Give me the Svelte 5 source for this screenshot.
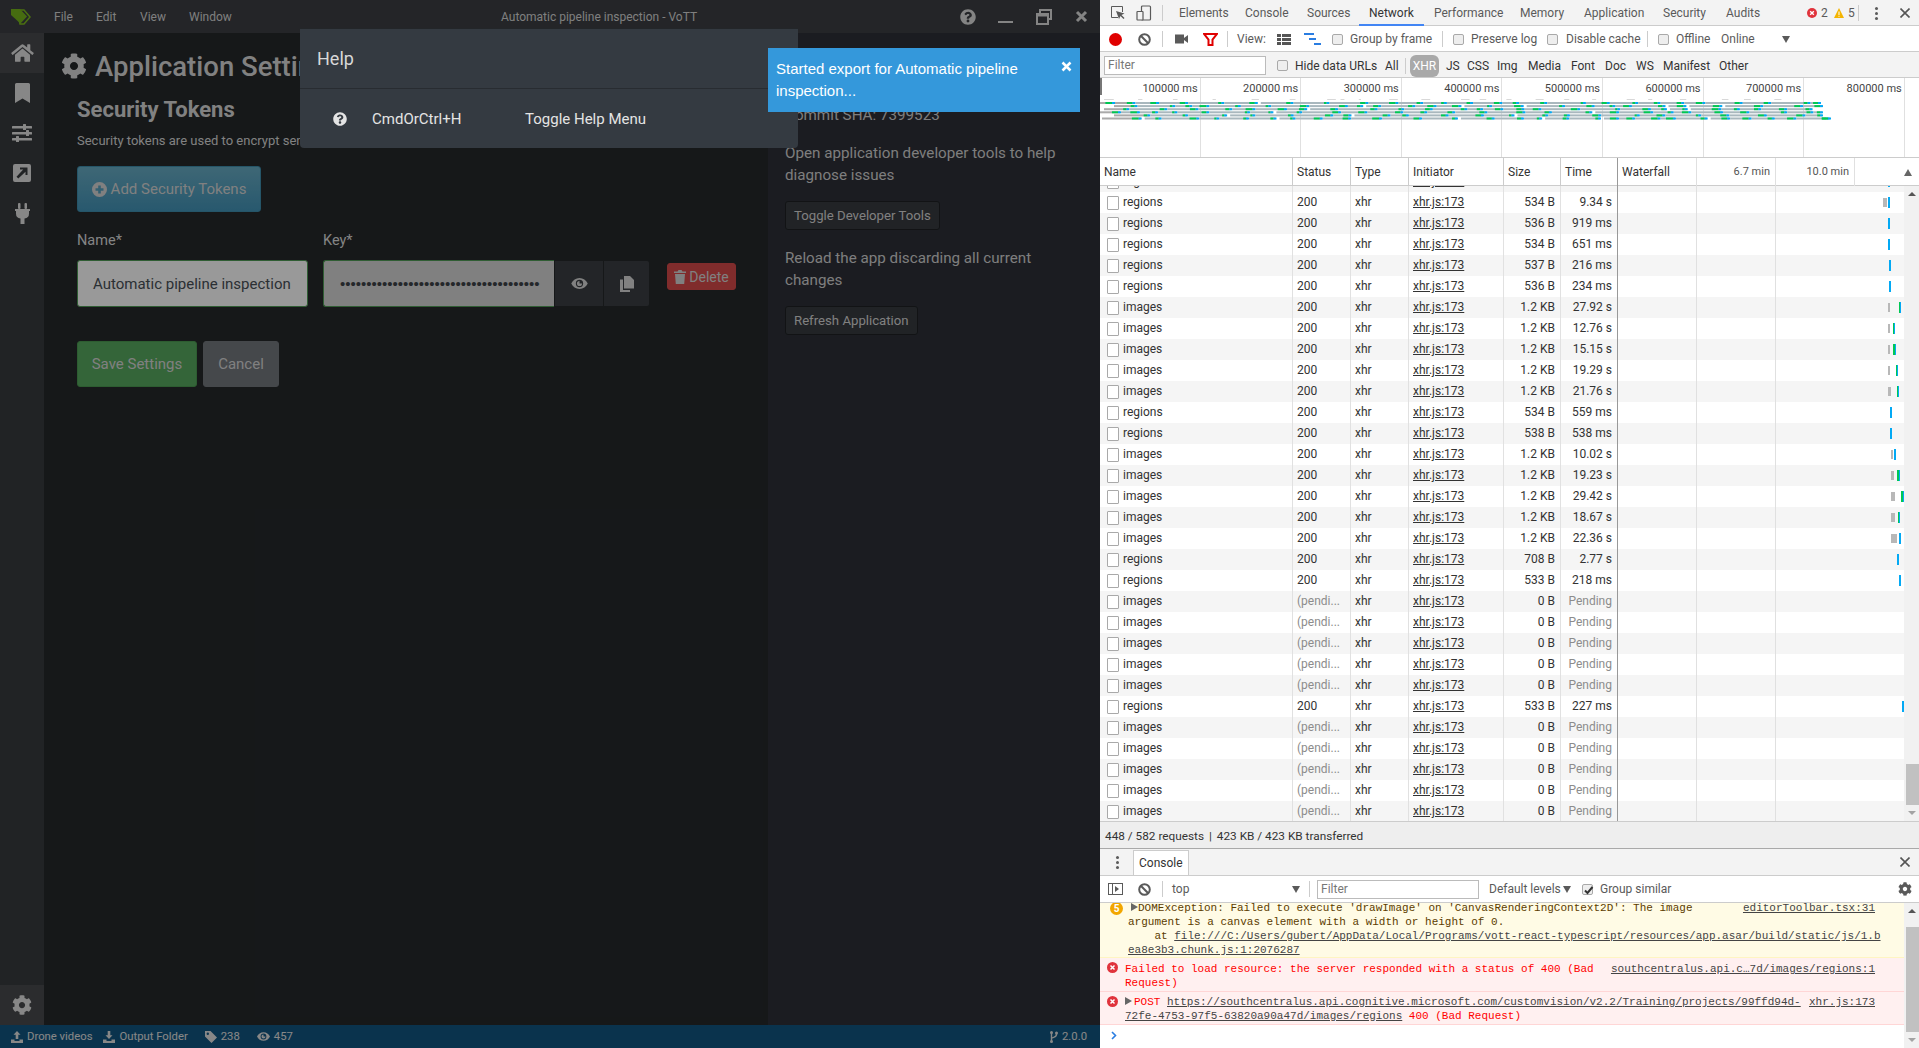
<script lang="ts">
  type Bar = { left: number; width: number; kind: string };
  type Row = { name: string; status: string; size: string; time: string; bars: Bar[] };

  // grey = queueing, green = waiting, blue = download; offsets from the waterfall column
  function bars(grey: number[] | null, green: number[] | null, blue: number[] | null): Bar[] {
    const out: Bar[] = [];
    if (grey) out.push({ left: grey[0] + 82, width: grey[1], kind: 'grey' });
    if (green) out.push({ left: green[0] + 82, width: green[1], kind: 'green' });
    if (blue) out.push({ left: blue[0] + 82, width: blue[1], kind: 'blue' });
    return out;
  }

  const pending = (): Row => ({ name: 'images', status: '(pendi...', size: '0 B', time: 'Pending', bars: [] });

  const rows: Row[] = [
    { name: 'regions', status: '200', size: '534 B', time: '9.34 s', bars: bars([183, 4], null, [187.5, 2]) },
    { name: 'regions', status: '200', size: '536 B', time: '919 ms', bars: bars(null, null, [187.5, 2]) },
    { name: 'regions', status: '200', size: '534 B', time: '651 ms', bars: bars(null, null, [187.5, 2]) },
    { name: 'regions', status: '200', size: '537 B', time: '216 ms', bars: bars(null, null, [188.5, 2]) },
    { name: 'regions', status: '200', size: '536 B', time: '234 ms', bars: bars(null, null, [188.5, 2]) },
    { name: 'images', status: '200', size: '1.2 KB', time: '27.92 s', bars: bars([188, 2], [199, 1], [200, 1]) },
    { name: 'images', status: '200', size: '1.2 KB', time: '12.76 s', bars: bars([188, 2], [193, 1], [194, 1]) },
    { name: 'images', status: '200', size: '1.2 KB', time: '15.15 s', bars: bars([188, 2], [193, 2], [195, 1]) },
    { name: 'images', status: '200', size: '1.2 KB', time: '19.29 s', bars: bars([188, 2], [196, 1], [197, 1]) },
    { name: 'images', status: '200', size: '1.2 KB', time: '21.76 s', bars: bars([188, 3], [197, 1], [198, 1]) },
    { name: 'regions', status: '200', size: '534 B', time: '559 ms', bars: bars(null, null, [190, 2]) },
    { name: 'regions', status: '200', size: '538 B', time: '538 ms', bars: bars(null, null, [190, 2]) },
    { name: 'images', status: '200', size: '1.2 KB', time: '10.02 s', bars: bars([191, 2], null, [194, 2]) },
    { name: 'images', status: '200', size: '1.2 KB', time: '19.23 s', bars: bars([191, 3], [197, 2], [199, 1]) },
    { name: 'images', status: '200', size: '1.2 KB', time: '29.42 s', bars: bars([191, 4], [201, 2], [203, 1]) },
    { name: 'images', status: '200', size: '1.2 KB', time: '18.67 s', bars: bars([191, 4], [198, 1], [199, 1]) },
    { name: 'images', status: '200', size: '1.2 KB', time: '22.36 s', bars: bars([191, 6], null, [199, 2]) },
    { name: 'regions', status: '200', size: '708 B', time: '2.77 s', bars: bars(null, null, [197, 2]) },
    { name: 'regions', status: '200', size: '533 B', time: '218 ms', bars: bars(null, null, [199, 2]) },
    pending(), pending(), pending(), pending(), pending(),
    { name: 'regions', status: '200', size: '533 B', time: '227 ms', bars: bars(null, null, [202, 2]) },
    pending(), pending(), pending(), pending(), pending()
  ];

  // overview strip: six lanes of requests, drawn from a small seeded generator
  let seed = 7;
  function rnd(): number {
    seed = (seed * 16807) % 2147483647;
    return seed / 2147483647;
  }

  const laneEnds = [720, 722, 715, 722, 722, 730];
  const laneStarts = [0, 14, 4, 0, 14, 2];
  const overview: { x: number; y: number; w: number; h: number; fill: string }[] = [];
  laneEnds.forEach((end, lane) => {
    const y = 24 + lane * 3.1;
    let x = laneStarts[lane];
    while (x < end) {
      const len = Math.min(14 + rnd() * 26, end - x);
      overview.push({ x, y, w: len, h: 2, fill: x < 20 ? '#aaaaaa' : '#a9b8be' });
      const g = 2 + rnd() * 5;
      overview.push({ x: x + len - g - 2, y, w: g, h: 2, fill: '#00c853' });
      overview.push({ x: x + len - 2, y, w: 3, h: 2, fill: '#03a9f4' });
      x += len + (rnd() < 0.15 ? 4 : 1);
    }
  });
  // faint stubs above the first lane
  for (let x = 4; x < 690; x += 12 + rnd() * 32) {
    overview.push({ x, y: 21, w: 2 + rnd() * 8, h: 1, fill: '#d8d8d8' });
  }
  const ticks = [100, 200, 300, 400, 500, 600, 700, 800];
</script>

{#snippet question(size)}
  <svg width={size} height={size} viewBox="0 0 512 512" fill="currentColor"><path d="M504 256c0 136.997-111.043 248-248 248S8 392.997 8 256C8 119.083 119.043 8 256 8s248 111.083 248 248zM262.655 90c-54.497 0-89.255 22.957-116.549 63.758-3.536 5.286-2.353 12.415 2.715 16.258l34.699 26.31c5.205 3.947 12.621 3.008 16.665-2.122 17.864-22.658 30.113-35.797 57.303-35.797 20.429 0 45.698 13.148 45.698 32.958 0 14.976-12.363 22.667-32.534 33.976C247.128 238.528 216 254.941 216 296v4c0 6.627 5.373 12 12 12h56c6.627 0 12-5.373 12-12v-1.333c0-28.462 83.186-29.647 83.186-106.667 0-58.002-60.165-102-116.531-102zM256 338c-25.365 0-46 20.635-46 46 0 25.364 20.635 46 46 46s46-20.636 46-46c0-25.365-20.635-46-46-46z"/></svg>
{/snippet}

{#snippet cog(size)}
  <svg width={size} height={size} viewBox="0 0 512 512" fill="currentColor"><path d="M487.4 315.7l-42.6-24.6c4.3-23.2 4.3-47 0-70.2l42.6-24.6c4.9-2.8 7.1-8.6 5.5-14-11.1-35.6-30-67.8-54.7-94.6-3.8-4.1-10-5.1-14.8-2.3L380.8 110c-17.9-15.4-38.5-27.3-60.8-35.1V25.8c0-5.6-3.9-10.5-9.4-11.7-36.7-8.2-74.3-7.8-109.2 0-5.5 1.2-9.4 6.1-9.4 11.7V75c-22.2 7.9-42.8 19.8-60.8 35.1L88.7 85.5c-4.9-2.8-11-1.9-14.8 2.3-24.7 26.7-43.6 58.9-54.7 94.6-1.7 5.4.6 11.2 5.5 14L67.3 221c-4.3 23.2-4.3 47 0 70.2l-42.6 24.6c-4.9 2.8-7.1 8.6-5.5 14 11.1 35.6 30 67.8 54.7 94.6 3.8 4.1 10 5.1 14.8 2.3l42.6-24.6c17.9 15.4 38.5 27.3 60.8 35.1v49.2c0 5.6 3.9 10.5 9.4 11.7 36.7 8.2 74.3 7.8 109.2 0 5.5-1.2 9.4-6.1 9.4-11.7v-49.2c22.2-7.9 42.8-19.8 60.8-35.1l42.6 24.6c4.9 2.8 11 1.9 14.8-2.3 24.7-26.7 43.6-58.9 54.7-94.6 1.5-5.5-.7-11.3-5.6-14.1zM256 336c-44.1 0-80-35.9-80-80s35.9-80 80-80 80 35.9 80 80-35.9 80-80 80z"/></svg>
{/snippet}

{#snippet eye(w, h)}
  <svg width={w} height={h} viewBox="0 0 18 12" fill="currentColor"><path fill-rule="evenodd" d="M9 0C5 0 1.800 2.400 0 6c1.800 3.600 5 6 9 6s7.200-2.400 9-6c-1.800-3.600-5-6-9-6zm0 10a4 4 0 1 1 0-8 4 4 0 0 1 0 8z"/><path d="M9 3.200a2.800 2.800 0 1 0 2.800 2.800H9z"/></svg>
{/snippet}

{#snippet checkbox(checked)}
  <span class="cb">{#if checked}<svg width="11" height="11" viewBox="0 0 11 11"><path d="M2 5.500l2.500 2.500L9.500 2" fill="none" stroke="#333" stroke-width="2"/></svg>{/if}</span>
{/snippet}

{#snippet errorIcon()}
  <svg class="msg-icon" width="11" height="11" viewBox="0 0 11 11"><circle cx="5.500" cy="5.500" r="5.500" fill="#e0333c"/><path d="M3.500 3.500l4 4M7.500 3.500l-4 4" stroke="#fff" stroke-width="1.500"/></svg>
{/snippet}

<div class="screen">
  <div class="app">
    <header class="titlebar">
      <div class="brand">
        <svg class="logo" width="20" height="16" viewBox="0 0 20 16"><path d="M6 1h7l6 7-6 7H9z" fill="none" stroke="#7dbb1e" stroke-width="1.500"/><path d="M0 0h9l7 7.500-6.500 7L0 6z" fill="#76b41c"/></svg>
        <nav class="menu"><span>File</span><span>Edit</span><span>View</span><span>Window</span></nav>
      </div>
      <div class="title">Automatic pipeline inspection - VoTT</div>
      <div class="winctl">
        <span class="wc-help">{@render question(16)}</span>
        <svg width="16" height="16" viewBox="0 0 16 16"><rect x="0" y="12" width="15" height="2" fill="currentColor"/></svg>
        <svg width="16" height="16" viewBox="0 0 16 16" fill="none" stroke="currentColor" stroke-width="2"><path d="M4 4V1h11v9h-3"/><rect x="1" y="5" width="11" height="10"/><path d="M1 6h11" stroke-width="3"/></svg>
        <svg width="13" height="13" viewBox="0 0 13 13"><path d="M2 2l9 9M11 2l-9 9" stroke="currentColor" stroke-width="3"/></svg>
      </div>
    </header>

    <div class="body">
      <aside class="sidebar">
        <div class="side-item active"><svg width="23" height="20" viewBox="0 0 576 512" fill="currentColor"><path d="M280.37 148.26L96 300.11V464a16 16 0 0 0 16 16l112.06-.29a16 16 0 0 0 15.92-16V368a16 16 0 0 1 16-16h64a16 16 0 0 1 16 16v95.64a16 16 0 0 0 16 16.05L464 480a16 16 0 0 0 16-16V300L295.67 148.26a12.19 12.19 0 0 0-15.3 0zM571.6 251.47L488 182.56V44.05a12 12 0 0 0-12-12h-56a12 12 0 0 0-12 12v72.61L318.47 43a48 48 0 0 0-61 0L4.34 251.47a12 12 0 0 0-1.6 16.9l25.5 31A12 12 0 0 0 45.15 301l235.22-193.74a12.19 12.19 0 0 1 15.3 0L530.9 301a12 12 0 0 0 16.9-1.6l25.5-31a12 12 0 0 0-1.7-16.93z"/></svg></div>
        <div class="side-item"><svg width="15" height="20" viewBox="0 0 15 20" fill="currentColor"><path d="M0 1.500A1.500 1.500 0 0 1 1.500 0h12A1.500 1.500 0 0 1 15 1.500V20l-7.500-4.500L0 20z"/></svg></div>
        <div class="side-item"><svg width="20" height="18" viewBox="0 0 20 18" fill="currentColor"><rect y="2" width="20" height="2.500" rx=".5"/><rect y="8" width="20" height="2.500" rx=".5"/><rect y="14" width="20" height="2.500" rx=".5"/><rect x="11" width="3" height="6" rx=".5"/><rect x="14" y="6" width="3" height="6" rx=".5"/><rect x="4" y="12" width="3" height="6" rx=".5"/></svg></div>
        <div class="side-item"><svg width="18" height="18" viewBox="0 0 18 18"><path fill="currentColor" fill-rule="evenodd" d="M2 0h14a2 2 0 0 1 2 2v14a2 2 0 0 1-2 2H2a2 2 0 0 1-2-2V2a2 2 0 0 1 2-2zm5 3.500v2h3.200L3.500 12.700l1.800 1.800 7.200-6.800V11h2V3.500z"/></svg></div>
        <div class="side-item"><svg width="15" height="21" viewBox="0 0 15 21" fill="currentColor"><rect x="3" width="2.500" height="6" rx="1"/><rect x="9.500" width="2.500" height="6" rx="1"/><path d="M0 6h15v2h-1v2.500a5 5 0 0 1-4.500 5V21h-4v-5.500A5 5 0 0 1 1 10.500V8H0z"/></svg></div>
        <div class="side-item active bottom">{@render cog(20)}</div>
      </aside>

      <main class="content">
        <h2 class="page-title">{@render cog(26)}<span>Application Settings</span></h2>
        <section class="tokens">
          <h3>Security Tokens</h3>
          <p class="hint">Security tokens are used to encrypt sensitive data within project files</p>
          <button class="btn add">
            <svg width="15" height="15" viewBox="0 0 15 15"><path fill="currentColor" fill-rule="evenodd" d="M7.500 0a7.500 7.500 0 1 0 0 15 7.500 7.500 0 0 0 0-15zM6.200 3.500h2.600v2.700h2.700v2.600H8.800v2.700H6.200V8.800H3.500V6.200h2.700z"/></svg>
            Add Security Tokens
          </button>
          <div class="token-row">
            <div class="field name">
              <span class="label">Name*</span>
              <div class="input light">Automatic pipeline inspection</div>
            </div>
            <div class="field key">
              <span class="label">Key*</span>
              <div class="key-group">
                <div class="input grey"><span class="dots">••••••••••••••••••••••••••••••••••••••••</span></div>
                <span class="addon eye">{@render eye(17, 11)}</span>
                <span class="addon copy"><svg width="14" height="16" viewBox="0 0 14 16" fill="currentColor"><path d="M4 0h6l4 4v8.500H4z"/><path d="M0 3.500h3V14h7v2H0z"/></svg></span>
              </div>
            </div>
            <button class="btn del"><svg width="12" height="14" viewBox="0 0 12 14" fill="currentColor"><path d="M0 1.500h3.500L4.500 0h3l1 1.500H12V3H0zM1 4h10l-.8 10H1.800z"/></svg> Delete</button>
          </div>
          <div class="actions">
            <button class="btn save">Save Settings</button>
            <button class="btn cancel">Cancel</button>
          </div>
        </section>
      </main>

      <aside class="panel">
        <p class="commit">Commit SHA: 7399523</p>
        <p class="note">Open application developer tools to help diagnose issues</p>
        <button class="btn ghost">Toggle Developer Tools</button>
        <p class="note second">Reload the app discarding all current changes</p>
        <button class="btn ghost">Refresh Application</button>
      </aside>
    </div>

    <footer class="statusbar">
      <span class="st first"><svg width="12" height="12" viewBox="0 0 12 12" fill="currentColor"><path d="M6 0l3.500 3.800H7.300V8H4.700V3.800H2.500zM0 8.500h3.500V10h5V8.500H12V12H0z"/></svg>Drone videos</span>
      <span class="st"><svg width="12" height="12" viewBox="0 0 12 12" fill="currentColor"><path d="M4.700 0h2.600v4.200h2.200L6 8 2.500 4.200h2.200zM0 8.500h3.500V10h5V8.500H12V12H0z"/></svg>Output Folder</span>
      <span class="st wide"><svg width="12" height="12" viewBox="0 0 12 12" fill="currentColor"><path fill-rule="evenodd" d="M0 0h5.500L12 6.500 6.500 12 0 5.500zm2.800 1.600a1.200 1.200 0 1 0 0 2.400 1.200 1.200 0 0 0 0-2.400z"/></svg>238</span>
      <span class="st wide">{@render eye(13, 9)}457</span>
      <span class="st version"><svg width="8" height="12" viewBox="0 0 8 12" fill="currentColor"><circle cx="1.500" cy="1.500" r="1.500"/><circle cx="1.500" cy="10.500" r="1.500"/><circle cx="6.500" cy="2" r="1.500"/><path d="M.8 2h1.400v8H.8zM5.800 3h1.400c0 3-2 3.500-5 4.500v-1.300c2-.7 3.600-1.200 3.600-3.200z"/></svg>2.0.0</span>
    </footer>

    <div class="backdrop"></div>
    <div class="modal">
      <div class="modal-head">Help</div>
      <div class="modal-body">
        <span class="m-icon">{@render question(14)}</span>
        <span class="m-key">CmdOrCtrl+H</span>
        <span>Toggle Help Menu</span>
      </div>
    </div>
    <div class="toast">
      <span>Started export for Automatic pipeline inspection...</span>
      <svg class="toast-x" width="11" height="11" viewBox="0 0 11 11"><path d="M1.500 1.500l8 8M9.500 1.500l-8 8" stroke="#fff" stroke-width="2.500"/></svg>
    </div>
  </div>

  <div class="devtools">
    <div class="tabs">
      <svg width="16" height="16" viewBox="0 0 16 16" fill="none" stroke="#5a5a5a"><path d="M8 12.500H1.500v-11h11V7"/><path d="M6 6l3 8 1.500-3 3 3 1-1-3-3 3-1.500z" fill="#5a5a5a" stroke="none"/></svg>
      <svg width="16" height="16" viewBox="0 0 16 16" fill="none" stroke="#5a5a5a" stroke-width="1.200"><rect x="5.500" y="1" width="9" height="14" rx="1"/><rect x="1" y="6.500" width="6" height="8.500" rx=".5" fill="#f3f3f3"/></svg>
      <i class="vr"></i>
      <span>Elements</span><span>Console</span><span>Sources</span><span class="on">Network</span><span>Performance</span><span>Memory</span><span>Application</span><span>Security</span><span>Audits</span>
      <svg width="10" height="10" viewBox="0 0 11 11"><circle cx="5.500" cy="5.500" r="5.500" fill="#e0333c"/><path d="M3.500 3.500l4 4M7.500 3.500l-4 4" stroke="#fff" stroke-width="1.500"/></svg>
      <span>2</span>
      <svg width="10" height="10" viewBox="0 0 10 10"><path d="M5 0l5 10H0z" fill="#f4b400"/><rect x="4.500" y="3.500" width="1" height="3.500" fill="#fff"/><rect x="4.500" y="7.800" width="1" height="1" fill="#fff"/></svg>
      <span>5</span>
      <i class="vr"></i>
      <i class="kebab"></i>
      <svg width="10" height="10" viewBox="0 0 10 10"><path d="M.5.5l9 9M9.500.5l-9 9" stroke="#555" stroke-width="1.600"/></svg>
    </div>

    <div class="toolbar net">
      <i class="rec"></i>
      <svg width="13" height="13" viewBox="0 0 13 13" fill="none" stroke="#5a5a5a" stroke-width="2"><circle cx="6.500" cy="6.500" r="5.300"/><path d="M2.800 2.800l7.400 7.400"/></svg>
      <i class="vr"></i>
      <svg width="13" height="10" viewBox="0 0 13 10" fill="#5a5a5a"><rect width="9" height="9" y=".5"/><path d="M9 4l4-3v8L9 6z"/></svg>
      <svg width="15" height="13" viewBox="0 0 15 13"><path d="M1 1h13L9.500 6.500V12h-4V6.500z" fill="none" stroke="#e00000" stroke-width="2"/></svg>
      <i class="vr"></i>
      <span>View:</span>
      <svg width="14" height="11" viewBox="0 0 14 11" fill="#555"><rect width="4" height="3"/><rect y="4" width="4" height="3"/><rect y="8" width="4" height="3"/><rect x="5" width="9" height="3"/><rect x="5" y="4" width="9" height="3"/><rect x="5" y="8" width="9" height="3"/></svg>
      <svg width="17" height="12" viewBox="0 0 17 12" fill="#2a7de1"><rect width="10" height="2"/><rect x="5" y="5" width="7" height="2"/><rect x="10" y="10" width="7" height="2"/></svg>
      {@render checkbox(false)}<span>Group by frame</span>
      <i class="vr"></i>
      {@render checkbox(false)}<span>Preserve log</span>
      {@render checkbox(false)}<span>Disable cache</span>
      <i class="vr"></i>
      {@render checkbox(false)}<span>Offline</span><span>Online</span>
      <i class="arrow"></i>
    </div>

    <div class="toolbar filters">
      <div class="filter-input">Filter</div>
      {@render checkbox(false)}<span>Hide data URLs</span>
      <span>All</span><i class="vr"></i><span class="pill">XHR</span>
      <span>JS</span><span>CSS</span><span>Img</span><span>Media</span><span>Font</span><span>Doc</span><span>WS</span><span>Manifest</span><span>Other</span>
    </div>

    <div class="overview">
      <div class="ticks">
        {#each ticks as t}<span class="tick">{t}000 ms</span>{/each}
      </div>
      <i class="handle"></i>
      <svg class="lanes" width="819" height="80">
        {#each overview as s}<rect x={s.x} y={s.y} width={s.w} height={s.h} fill={s.fill} />{/each}
      </svg>
    </div>

    <div class="grid-head">
      <span>Name</span><span>Status</span><span>Type</span><span>Initiator</span><span>Size</span><span class="strong">Time</span>
      <span class="wf-head"><b>Waterfall</b><em>6.7 min</em><em>10.0 min</em><i class="sort"></i></span>
    </div>

    <div class="grid-wrap">
      <div class="grid-rows">
        <div class="row alt clipped">
          <span class="name"><i class="doc"></i>regions</span><span>200</span><span>xhr</span><span class="link">xhr.js:173</span><span class="num">534 B</span><span class="num strong">1.2 s</span>
          <span class="wf"><i class="bar blue clip-bar"></i></span>
        </div>
        {#each rows as r, i}
          <div class="row" class:alt={i % 2 === 1}>
            <span class="name"><i class="doc"></i>{r.name}</span>
            <span class:dim={r.status !== '200'}>{r.status}</span>
            <span>xhr</span>
            <span class="link">xhr.js:173</span>
            <span class="num">{r.size}</span>
            <span class="num strong" class:dim={r.time === 'Pending'}>{r.time}</span>
            <span class="wf">
              {#each r.bars as b}<i class="bar {b.kind}" style="left:{b.left}px;width:{b.width}px"></i>{/each}
            </span>
          </div>
        {/each}
        <i class="guide g1"></i><i class="guide g2"></i>
      </div>
      <div class="vscroll">
        <i class="up"></i><i class="down"></i><i class="thumb net-thumb"></i>
      </div>
    </div>

    <div class="summary">448 / 582 requests <b>|</b> 423 KB / 423 KB transferred</div>

    <div class="drawer-head">
      <i class="kebab"></i>
      <span class="drawer-tab">Console</span>
      <svg width="10" height="10" viewBox="0 0 10 10"><path d="M.5.5l9 9M9.500.5l-9 9" stroke="#555" stroke-width="1.600"/></svg>
    </div>

    <div class="toolbar con">
      <svg width="15" height="12" viewBox="0 0 15 12" fill="none" stroke="#5a5a5a"><rect x=".5" y=".5" width="14" height="11"/><path d="M4.500 0v12"/><path d="M7 3l4 3-4 3z" fill="#5a5a5a" stroke="none"/></svg>
      <svg width="13" height="13" viewBox="0 0 13 13" fill="none" stroke="#5a5a5a" stroke-width="2"><circle cx="6.500" cy="6.500" r="5.300"/><path d="M2.800 2.800l7.400 7.400"/></svg>
      <i class="vr"></i>
      <span>top</span>
      <i class="arrow"></i>
      <i class="vr"></i>
      <div class="filter-input">Filter</div>
      <span>Default levels</span>
      <i class="arrow"></i>
      {@render checkbox(true)}<span>Group similar</span>
      <span class="con-gear">{@render cog(14)}</span>
    </div>

    <div class="console">
      <div class="messages">
        <div class="msg warn">
          <span class="badge">5</span>
          <a class="src" href="#top">editorToolbar.tsx:31</a>
          <div class="text"><i class="tri"></i>DOMException: Failed to execute 'drawImage' on 'CanvasRenderingContext2D': The image<br>argument is a canvas element with a width or height of 0.<br>{'    at '}<u>file:///C:/Users/gubert/AppData/Local/Programs/vott-react-typescript/resources/app.asar/build/static/js/1.b<br>ea8e3b3.chunk.js:1:2076287</u></div>
        </div>
        <div class="msg err first-err">
          {@render errorIcon()}
          <a class="src" href="#top">southcentralus.api.c…7d/images/regions:1</a>
          <div class="text">Failed to load resource: the server responded with a status of 400 (Bad<br>Request)</div>
        </div>
        <div class="msg err">
          {@render errorIcon()}
          <a class="src" href="#top">xhr.js:173</a>
          <div class="text"><i class="tri"></i>POST <u>https://southcentralus.api.cognitive.microsoft.com/customvision/v2.2/Training/projects/99ffd94d-<br>72fe-4753-97f5-63820a90a47d/images/regions</u> 400 (Bad Request)</div>
        </div>
        <div class="prompt"><svg width="6" height="9" viewBox="0 0 6 9"><path d="M1 1l3.500 3.500L1 8" fill="none" stroke="#2a7de1" stroke-width="1.600"/></svg></div>
      </div>
      <div class="vscroll">
        <i class="up"></i><i class="down"></i><i class="thumb con-thumb"></i>
      </div>
    </div>
  </div>
</div>

<style>
  :global(body) {
    margin: 0;
    background: #fff;
    overflow: hidden;
  }

  .screen {
    display: flex;
    width: 1919px;
    height: 1048px;
    overflow: hidden;
    font-family: Roboto, "Liberation Sans", sans-serif;
  }

  p, h2, h3 {
    margin: 0;
  }

  i {
    display: block;
    font-style: normal;
  }

  /* ---------- VoTT window ---------- */
  .app {
    position: relative;
    display: flex;
    flex-direction: column;
    width: 1100px;
    height: 1048px;
    flex: none;
    color: #d8d8d8;
    background: #25282b;
  }

  .titlebar {
    display: grid;
    grid-template-columns: 501px 210px 1fr;
    align-items: center;
    height: 33px;
    flex: none;
    background: #3c3f43;
    font-size: 12px;
    color: #d4d4d4;
  }

  .brand {
    display: flex;
    align-items: center;
  }

  .logo {
    margin-left: 11px;
  }

  .menu {
    display: flex;
    margin-left: 23px;
  }

  .menu span:nth-child(1) { width: 42px; }
  .menu span:nth-child(2) { width: 44px; }
  .menu span:nth-child(3) { width: 49px; }

  .winctl {
    display: grid;
    grid-template-columns: 38px 38px 38px 37px;
    justify-content: end;
    align-items: center;
    justify-items: center;
    color: #ddd;
  }

  .wc-help {
    display: flex;
  }

  .body {
    display: flex;
    flex: 1;
    min-height: 0;
  }

  .sidebar {
    display: flex;
    flex-direction: column;
    width: 44px;
    flex: none;
    background: #383b3e;
    color: #e2e2e2;
  }

  .side-item {
    display: flex;
    align-items: center;
    justify-content: center;
    height: 40px;
    flex: none;
  }

  .side-item.active {
    background: #484a4d;
  }

  .side-item.bottom {
    margin-top: auto;
  }

  .content {
    flex: 1;
    min-width: 0;
    padding: 17px 0 0 17px;
  }

  .page-title {
    display: flex;
    align-items: center;
    gap: 8px;
    height: 32px;
    font-size: 27.500px;
    font-weight: 500;
    white-space: nowrap;
  }

  .tokens {
    margin: 14px 0 0 16px;
  }

  .tokens h3 {
    height: 28px;
    line-height: 28px;
    font-size: 22px;
    font-weight: 700;
  }

  .hint {
    margin-top: 8px;
    height: 18px;
    line-height: 18px;
    font-size: 13px;
    white-space: nowrap;
  }

  .btn {
    border: 1px solid transparent;
    border-radius: 3px;
    font: inherit;
    color: #d6d6d6;
    padding: 0;
  }

  .add {
    display: flex;
    align-items: center;
    justify-content: center;
    gap: 4px;
    width: 184px;
    height: 46px;
    margin-top: 16px;
    font-size: 15px;
    background: linear-gradient(#68acc4, #4394b8);
    border-color: #3f8eae;
  }

  .token-row {
    display: flex;
    margin-top: 18px;
  }

  .field {
    display: flex;
    flex-direction: column;
  }

  .field.name {
    width: 231px;
  }

  .field.key {
    width: 327px;
    margin-left: 15px;
  }

  .label {
    height: 30px;
    line-height: 22px;
    font-size: 14.500px;
    color: #dcdcdc;
  }

  .input {
    display: flex;
    align-items: center;
    box-sizing: border-box;
    height: 47px;
    padding-left: 15px;
    border: 1px solid #4f9c55;
    border-radius: 3px;
    font-size: 15px;
    color: #3d4247;
    white-space: nowrap;
  }

  .input.light {
    background: #fff;
    color: #495057;
  }

  .input.grey {
    width: 231px;
    flex: none;
    background: #d6d6d6;
    border-right: 0;
    border-radius: 3px 0 0 3px;
    overflow: hidden;
    padding-left: 16px;
  }

  .dots {
    width: 200px;
    overflow: hidden;
    font-family: "Liberation Sans", sans-serif;
    font-size: 15px;
  }

  .key-group {
    display: flex;
    height: 47px;
  }

  .addon {
    display: flex;
    align-items: center;
    justify-content: center;
    box-sizing: border-box;
    height: 47px;
    background: #3b3f43;
    border: 1px solid #25282b;
    color: #d8d8d8;
  }

  .addon.eye {
    width: 50px;
  }

  .addon.copy {
    width: 46px;
    border-radius: 0 3px 3px 0;
    border-left: 0;
  }

  .del {
    display: flex;
    align-items: center;
    justify-content: center;
    gap: 3px;
    width: 69px;
    height: 27px;
    margin: 33px 0 0 17px;
    font-size: 14px;
    background: #d64a4a;
    border-color: #d64a4a;
  }

  .actions {
    display: flex;
    gap: 6px;
    margin-top: 34px;
  }

  .save,
  .cancel {
    height: 46px;
    font-size: 15px;
  }

  .save {
    width: 120px;
    background: #58a85f;
    border-color: #4c9a52;
  }

  .cancel {
    width: 76px;
    background: #73787e;
    border-color: #73787e;
  }

  .panel {
    width: 332px;
    flex: none;
    box-sizing: border-box;
    padding: 71px 0 0 17px;
    background: #2d3037;
    font-size: 15.200px;
    line-height: 22px;
    color: #d2d2d2;
  }

  .commit {
    height: 38px;
  }

  .note {
    width: 290px;
  }

  .note.second {
    margin-top: 17px;
  }

  .ghost {
    display: block;
    box-sizing: border-box;
    height: 29px;
    margin-top: 15px;
    padding: 0 8px;
    font-size: 13.200px;
    line-height: 27px;
    color: #d6d6d6;
    background: #383b40;
    border-color: #1f2124;
  }

  .statusbar {
    display: flex;
    align-items: center;
    height: 23px;
    flex: none;
    background: #125680;
    font-size: 11.300px;
    color: #e2e2e2;
  }

  .st {
    display: flex;
    align-items: center;
    gap: 4px;
    margin-left: 11px;
  }

  .st.wide {
    margin-left: 17px;
  }

  .st.version {
    margin-left: auto;
    margin-right: 13px;
  }

  .backdrop {
    position: absolute;
    inset: 0;
    z-index: 10;
    background: rgba(0, 0, 0, .4);
  }

  .modal {
    position: absolute;
    z-index: 11;
    top: 28px;
    left: 300px;
    width: 498px;
    height: 120px;
    box-sizing: border-box;
    border-radius: 0 0 4px 4px;
    border-top: 1px solid #232629;
    background: #343a41;
    color: #e4e4e4;
  }

  .modal-head {
    height: 59px;
    line-height: 59px;
    padding-left: 17px;
    font-size: 18px;
    color: #d8d8d8;
    border-bottom: 1px solid #282c31;
  }

  .modal-body {
    display: flex;
    align-items: center;
    height: 60px;
    font-size: 15px;
  }

  .m-icon {
    display: flex;
    margin-left: 33px;
    width: 39px;
  }

  .m-key {
    width: 153px;
  }

  .toast {
    position: absolute;
    z-index: 12;
    top: 48px;
    left: 768px;
    box-sizing: border-box;
    width: 312px;
    height: 64px;
    padding: 10px 40px 0 8px;
    background: #3498db;
    color: #fff;
    font-family: "Liberation Sans", sans-serif;
    font-size: 15px;
    line-height: 22px;
  }

  .toast-x {
    position: absolute;
    top: 13px;
    right: 8px;
  }

  /* ---------- DevTools ---------- */
  .devtools {
    display: flex;
    flex-direction: column;
    width: 819px;
    flex: none;
    font-size: 12px;
    color: #333;
    background: #fff;
  }

  .vr {
    width: 1px;
    height: 16px;
    background: #ccc;
  }

  .tabs,
  .toolbar {
    display: grid;
    align-items: center;
    justify-items: start;
    box-sizing: border-box;
    white-space: nowrap;
  }

  .tabs {
    grid-template-columns: 26px 26px 17px 66px 62px 62px 65px 86px 64px 79px 63px 81px 14px 13px 14px 10px 17px 25px 1fr;
    height: 26px;
    padding-left: 10px;
    background: #f3f3f3;
    border-bottom: 1px solid #ccc;
    color: #5a5a5a;
  }

  .tabs .on {
    position: relative;
    align-self: stretch;
    line-height: 26px;
    color: #333;
  }

  .tabs .on::after {
    content: '';
    position: absolute;
    left: -10px;
    bottom: 0;
    width: 65px;
    height: 2px;
    background: #4285f4;
  }

  .kebab {
    width: 3px;
    height: 3px;
    border-radius: 50%;
    background: #5a5a5a;
    box-shadow: 0 -5px 0 #5a5a5a, 0 5px 0 #5a5a5a;
  }

  .cb {
    display: block;
    box-sizing: border-box;
    width: 11px;
    height: 11px;
    border: 1px solid #a9a9a9;
    border-radius: 2px;
    background: #eee;
    line-height: 0;
  }

  .arrow {
    width: 0;
    height: 0;
    border-style: solid;
    border-width: 7px 4px 0;
    border-color: #5a5a5a transparent transparent;
  }

  .toolbar.net {
    grid-template-columns: 29px 24px 13px 28px 24px 10px 40px 27px 28px 18px 92px 11px 18px 76px 19px 81px 11px 18px 45px 61px 1fr;
    height: 26px;
    padding: 1px 0 0 9px;
    border-bottom: 1px solid #ccc;
    color: #5a5a5a;
  }

  .rec {
    width: 13px;
    height: 13px;
    border-radius: 50%;
    background: #e00000;
  }

  .toolbar.filters {
    grid-template-columns: 173px 18px 90px 20px 5px 36px 21px 30px 31px 43px 34px 31px 27px 56px 1fr;
    height: 26px;
    padding: 2px 0 0 4px;
    background: #f3f3f3;
    border-bottom: 1px solid #ccc;
    color: #333;
  }

  .filter-input {
    box-sizing: border-box;
    width: 162px;
    height: 19px;
    padding-left: 3px;
    line-height: 17px;
    border: 1px solid #bbb;
    background: #fff;
    color: #777;
  }

  .pill {
    width: 29px;
    height: 22px;
    line-height: 22px;
    text-align: center;
    border-radius: 6px;
    background: #a9a9a9;
    color: #fff;
  }

  .overview {
    position: relative;
    height: 80px;
    flex: none;
    border-bottom: 1px solid #ccc;
    box-sizing: border-box;
  }

  .ticks {
    display: grid;
    grid-template-columns: repeat(8, 100.600px);
    height: 100%;
  }

  .tick {
    box-sizing: border-box;
    padding: 4px 2px 0 0;
    text-align: right;
    font-size: 11px;
    line-height: 14px;
    color: #444;
    border-right: 1px solid #e0e0e0;
  }

  .handle {
    position: absolute;
    left: 0;
    top: 0;
    width: 2px;
    height: 17px;
    background: #777;
  }

  .lanes {
    position: absolute;
    left: 0;
    top: 0;
  }

  .grid-head,
  .row {
    display: grid;
    grid-template-columns: 193px 58px 58px 95px 57px 57px 1fr;
  }

  .grid-head {
    height: 28px;
    flex: none;
    box-sizing: border-box;
    border-bottom: 1px solid #ccc;
    line-height: 28px;
    background: #fff;
  }

  .grid-head > span {
    box-sizing: border-box;
    padding-left: 4px;
    border-right: 1px solid #ccc;
  }

  .grid-head > .strong {
    border-right-color: #999;
  }

  .grid-head > .wf-head {
    display: grid;
    grid-template-columns: 79px 79px 79px 1fr;
    padding-left: 0;
    border-right: 0;
  }

  .wf-head b,
  .wf-head em {
    font-weight: 400;
    font-style: normal;
    border-right: 1px solid #e0e0e0;
  }

  .wf-head b {
    padding-left: 4px;
  }

  .wf-head em {
    padding-right: 5px;
    text-align: right;
    font-size: 11px;
    color: #555;
  }

  .sort {
    justify-self: end;
    align-self: center;
    width: 0;
    height: 0;
    margin-right: 7px;
    border-style: solid;
    border-width: 0 4px 7px;
    border-color: transparent transparent #666;
  }

  .grid-wrap {
    position: relative;
    display: flex;
    height: 635px;
    flex: none;
    overflow: hidden;
    border-bottom: 1px solid #ccc;
  }

  .grid-rows {
    position: relative;
    width: 804px;
    flex: none;
    overflow: hidden;
  }

  .row {
    height: 21px;
    line-height: 21px;
    white-space: nowrap;
  }

  .row.alt {
    background: #f5f5f5;
  }

  .row.clipped {
    margin-top: -15px;
  }

  .row > span {
    box-sizing: border-box;
    padding-left: 4px;
    border-right: 1px solid #e1e1e1;
  }

  .row > .strong {
    border-right-color: #999;
  }

  .row > .num {
    padding: 0 5px 0 0;
    text-align: right;
  }

  .row > .name {
    display: flex;
    align-items: center;
    padding-left: 7px;
  }

  .doc {
    box-sizing: border-box;
    width: 12px;
    height: 14px;
    margin-right: 4px;
    border: 1px solid #a9a9a9;
    border-radius: 1px;
    background: #fff;
  }

  .dim {
    color: #8c8c8c;
  }

  .link {
    text-decoration: underline;
  }

  .row > .wf {
    position: relative;
    padding: 0;
    border: 0;
  }

  .bar {
    position: absolute;
    top: 5px;
    height: 11px;
  }

  .bar.grey { background: #b8b8b8; height: 9px; top: 6px; }
  .bar.green { background: #00c853; }
  .bar.blue { background: #03a9f4; }

  .clip-bar {
    left: 269.500px;
    width: 2px;
  }

  .guide {
    position: absolute;
    top: 0;
    bottom: 0;
    width: 1px;
    background: #e0e0e0;
  }

  .g1 { left: 596px; }
  .g2 { left: 675px; }

  .vscroll {
    position: relative;
    flex: 1;
    background: #f1f1f1;
  }

  .up,
  .down {
    position: absolute;
    left: 4px;
    width: 0;
    height: 0;
    border-style: solid;
  }

  .up {
    top: 6px;
    border-width: 0 4px 4px;
    border-color: transparent transparent #555;
  }

  .down {
    bottom: 6px;
    border-width: 4px 4px 0;
    border-color: #a3a3a3 transparent transparent;
  }

  .thumb {
    position: absolute;
    left: 2px;
    right: 0;
    background: #c1c1c1;
  }

  .net-thumb {
    top: 578px;
    height: 41px;
  }

  .con-thumb {
    top: 24px;
    height: 105px;
  }

  .summary {
    height: 27px;
    flex: none;
    box-sizing: border-box;
    padding-left: 5px;
    line-height: 28px;
    font-size: 11.800px;
    background: #eee;
    border-bottom: 1px solid #a9a9a9;
  }

  .summary b {
    font-weight: 400;
    padding: 0 2px;
  }

  .drawer-head {
    display: flex;
    align-items: center;
    height: 27px;
    flex: none;
    box-sizing: border-box;
    padding-left: 16px;
    background: #f3f3f3;
    border-bottom: 1px solid #ccc;
  }

  .drawer-tab {
    box-sizing: border-box;
    height: 25px;
    margin: 1px 0 0 14px;
    padding: 0 5px;
    line-height: 24px;
    background: #fff;
    border: 1px solid #ccc;
    border-bottom: 0;
  }

  .drawer-head svg {
    margin-left: auto;
    margin-right: 9px;
  }

  .toolbar.con {
    grid-template-columns: 30px 24px 10px 120px 17px 8px 172px 74px 19px 18px 298px 1fr;
    height: 27px;
    padding-left: 8px;
    border-bottom: 1px solid #ccc;
    color: #5a5a5a;
  }

  .con-gear {
    display: flex;
    color: #5a5a5a;
  }

  .console {
    display: flex;
    flex: 1;
    min-height: 0;
  }

  .messages {
    width: 804px;
    flex: none;
    font-family: "Liberation Mono", monospace;
    font-size: 11px;
    line-height: 14px;
  }

  .msg {
    position: relative;
    box-sizing: border-box;
    border-bottom: 1px solid;
  }

  .text {
    white-space: pre;
  }

  .msg.warn {
    height: 55px;
    padding-left: 28px;
    background: #fffbe5;
    border-color: #fff5c2;
    color: #5c3c00;
    overflow: hidden;
  }

  .msg.warn .text {
    margin-top: -2px;
  }

  .msg.warn .tri {
    margin: 0 0 0 3px;
  }

  .msg.err {
    height: 33px;
    padding: 3px 0 0 25px;
    background: #fff0f0;
    border-color: #ffd6d6;
    color: #f00;
  }

  .msg.first-err {
    height: 34px;
    padding-top: 4px;
  }

  .msg u {
    color: #444;
  }

  .msg-icon {
    position: absolute;
    left: 7px;
    top: 4px;
  }

  .badge {
    position: absolute;
    left: 10px;
    top: -1px;
    width: 13px;
    height: 13px;
    border-radius: 50%;
    background: #f2a600;
    color: #fff;
    font: 700 10px/13px Roboto, sans-serif;
    text-align: center;
  }

  .tri {
    display: inline-block;
    width: 0;
    height: 0;
    margin-right: 2px;
    border-style: solid;
    border-width: 4px 0 4px 7px;
    border-color: transparent transparent transparent #666;
  }

  /* source links sit over the message text's right edge */
  .src {
    position: absolute;
    right: 29px;
    top: 3px;
    color: #444;
    text-decoration: underline;
  }

  .first-err .src {
    top: 4px;
  }

  .warn .src {
    top: -2px;
  }

  .prompt {
    padding: 5px 0 0 11px;
  }
</style>
